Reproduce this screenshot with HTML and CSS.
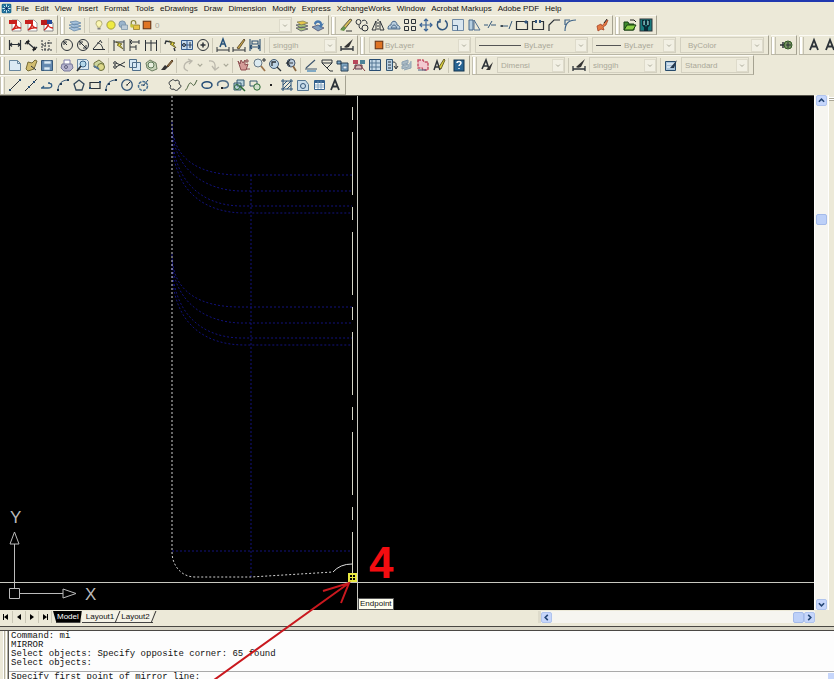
FILE: index.html
```html
<!DOCTYPE html>
<html lang="en">
<head>
<meta charset="utf-8">
<title>Drawing editor</title>
<link rel="stylesheet" href="styles.css">
</head>
<body>
<svg class="sprite" aria-hidden="true">
  <symbol id="app" viewBox="0 0 16 16"><rect x="1" y="1" width="14" height="14" rx="2" fill="#1c6a94"/><path d="M8 2v12M2 8h12M4 4l8 8M12 4l-8 8" stroke="#d4f0fa" stroke-width="1.4"/><circle cx="8" cy="8" r="2.4" fill="#123c70"/></symbol>
  <symbol id="pdf" viewBox="0 0 16 16"><path d="M5 3h6l3 3v8H5z" fill="#fff" stroke="#999"/><path d="M2 3h8v4H2z" fill="#c8201c" stroke="none"/><path d="M5 13c3-2 4-5 4-7 0 3 2 5 5 5-4-1-6 0-9 2z" fill="none" stroke="#d02018" stroke-width="1.4"/></symbol>
  <symbol id="pdf2" viewBox="0 0 16 16"><path d="M5 3h6l3 3v8H5z" fill="#fff" stroke="#888"/><path d="M2 3h6v5H2z" fill="#b81c1c" stroke="none"/><path d="M8 3h5v4H8z" fill="#244a9c" stroke="none"/><path d="M5 13c3-2 4-4 4-6 0 2 2 4 5 4" fill="none" stroke="#d02018" stroke-width="1.4"/></symbol>
  <symbol id="layers" viewBox="0 0 16 16"><path d="M2 11l7-1 5 2-7 2zM2 8l7-1 5 2-7 2zM3 5l6-1 5 2-7 2z" fill="#a6c2dc" stroke="#6688aa" stroke-width=".8"/></symbol>
  <symbol id="layerprev" viewBox="0 0 16 16"><path d="M2 11l7-1 5 2-7 2zM2 8l7-1 5 2-7 2z" fill="#a9c47a" stroke="#556" stroke-width=".8"/><path d="M3 5l6-1 5 2-7 2z" fill="#e5c649" stroke="#775" stroke-width=".7"/></symbol>
  <symbol id="layerstate" viewBox="0 0 16 16"><path d="M2 10l6-2 6 3-6 3z" fill="#7f9dbc" stroke="#446" stroke-width=".7"/><path d="M4 7c0-5 8-5 8 0l2-1-3 5-3-3h2c0-3-4-3-4 0z" fill="#4778ad" stroke="none"/></symbol>
  <symbol id="bulb" viewBox="0 0 16 16"><path d="M6 11c0-2-2-3-2-5a4 4 0 018 0c0 2-2 3-2 5z" fill="#fbf6b0" stroke="#9b975a"/><path d="M6 12h4v2H6z" fill="#7d7d7d"/></symbol>
  <symbol id="sun" viewBox="0 0 16 16"><circle cx="8" cy="8" r="5.5" fill="#eeea42" stroke="#888330"/></symbol>
  <symbol id="freeze" viewBox="0 0 16 16"><circle cx="7" cy="7" r="4.5" fill="#9ab4cc" stroke="#67839d"/><path d="M6 8h8v6H6z" fill="#bccbd7" stroke="#7790a6"/></symbol>
  <symbol id="lock" viewBox="0 0 16 16"><path d="M3 8V5c0-4 6-4 6 0v2" fill="none" stroke="#87823a" stroke-width="1.6"/><path d="M6 8h8v6H6z" fill="#e7c443" stroke="#8c7424"/><circle cx="4" cy="9" r="2.5" fill="#c6c33a"/></symbol>
  <symbol id="swatch" viewBox="0 0 16 16"><rect x="3" y="3" width="10" height="10" fill="#df7424" stroke="#6c3818" stroke-width="1.5"/></symbol>
  <symbol id="caret" viewBox="0 0 8 8"><path d="M1 2.5l3 3 3-3" fill="none" stroke="#aaa999" stroke-width="1.6"/></symbol>
  <symbol id="erase" viewBox="0 0 16 16"><path d="M3 12L12 2l2 1-8 10z" fill="#d8bd58" stroke="#4a4636" stroke-width=".9"/><path d="M2 13l4-4 2 2-2 3z" fill="#69944e" stroke="none"/><path d="M8 14h6" stroke="#333"/></symbol>
  <symbol id="copy" viewBox="0 0 16 16"><circle cx="4.5" cy="5" r="2.5"/><circle cx="11" cy="11" r="3"/><path d="M8 4c3-2 5 0 5 3M5 8c0 3 1 4 3 4"/></symbol>
  <symbol id="mirror" viewBox="0 0 16 16"><path d="M6 4v9H2zM10 4v9h4z"/><path d="M8 2v12" stroke-dasharray="2 1"/></symbol>
  <symbol id="offset" viewBox="0 0 16 16"><path d="M2 12c0-3 1-4 3-4 0-5 6-5 6 0 2 0 3 2 3 4z" fill="#b9cede" stroke="#48688a"/><path d="M5 11c1-1 1-3 3-3s2 2 3 3z" stroke="#48688a"/></symbol>
  <symbol id="array" viewBox="0 0 16 16"><path d="M2.500 2.500h4v4h-4zM9.500 2.500h4v4h-4zM2.500 9.500h4v4h-4zM9.500 9.500h4v4h-4z"/></symbol>
  <symbol id="move" viewBox="0 0 16 16"><path d="M8 2v12M2 8h12M6 4l2-2 2 2M6 12l2 2 2-2M4 6L2 8l2 2M12 6l2 2-2 2" stroke="#3a6496" stroke-width="1.200"/></symbol>
  <symbol id="rotate" viewBox="0 0 16 16"><path d="M5 4a5 5 0 106-.5M6 2v3H3" stroke="#33587f" stroke-width="1.500"/></symbol>
  <symbol id="scale" viewBox="0 0 16 16"><path d="M2.500 2.500h11v11h-11z" stroke="#708aa5" fill="#d9e6ef"/><path d="M2.500 8.500h5v5" stroke="#48688a"/></symbol>
  <symbol id="stretch" viewBox="0 0 16 16"><path d="M3 3h4v10H3z" fill="#b7d0e2" stroke="#48688a"/><path d="M8 3l6 10H8z" stroke="#4f6f91"/></symbol>
  <symbol id="trim" viewBox="0 0 16 16"><path d="M2 8h4M9 8h5M6 11l4-7" stroke="#34587a"/></symbol>
  <symbol id="extend" viewBox="0 0 16 16"><path d="M2 9h8M11 12l3-8" stroke="#34587a"/><circle cx="4" cy="9" r=".6" fill="#222"/></symbol>
  <symbol id="break" viewBox="0 0 16 16"><path d="M2.500 4.500h11v8h-11z" stroke-width="1.200"/><path d="M11 4h2v2h-2z" fill="#335780" stroke="#335780"/></symbol>
  <symbol id="break2" viewBox="0 0 16 16"><path d="M6 4.500H2.500v8h11v-8H10" stroke-width="1.200"/><path d="M5 3h2v3H5zM9 3h2v3H9z" fill="#335780" stroke="none"/></symbol>
  <symbol id="chamfer" viewBox="0 0 16 16"><path d="M3 14V8l5-5h6" stroke-width="1.200"/></symbol>
  <symbol id="fillet" viewBox="0 0 16 16"><path d="M3 14C3 7 6 3 14 3M3 8V3h5" stroke="#3f6488" stroke-width="1.200"/></symbol>
  <symbol id="explode" viewBox="0 0 16 16"><path d="M3 9l4-2 1 2 4-5 2-1-2 5-3 2 1 3-3-1-3 2z" fill="#e57b43" stroke="#a64326" stroke-width=".8"/><path d="M10 6l3-4" stroke="#222"/></symbol>
  <symbol id="openg" viewBox="0 0 16 16"><path d="M2 5h4l1 2h5v6H2z" fill="#3f8b2d" stroke="#173e13"/><path d="M2 13l3-5h9l-3 5z" fill="#8bce48" stroke="#173e13"/><path d="M8 3h4l2 2" stroke="#222"/></symbol>
  <symbol id="teal" viewBox="0 0 16 16"><rect x="2" y="2" width="12" height="12" fill="#187a7c"/><path d="M5 3v5l2 2v4M11 3v5l-2 2v4M8 3v5" stroke="#0b2531" stroke-width="1.800"/><path d="M6 4v4M10 4v4" stroke="#c4e1df"/></symbol>
  <symbol id="dlinear" viewBox="0 0 16 16"><path d="M2.500 3v10M13.500 3v10M3 7.500h10M5 6L3 7.500l2 2M11 6l2 1.500-2 2" stroke-width="1.200"/></symbol>
  <symbol id="daligned" viewBox="0 0 16 16"><path d="M4 5l8 7M2 7l4-4M10 14l4-4" stroke-width="1.300"/><path d="M3 4h4l-3 4zM13 13H9l3-4z" fill="#222" stroke="none"/></symbol>
  <symbol id="dordinate" viewBox="0 0 16 16"><path d="M3 3v10h11M6 13V6h7M10 13V3M3 8h4" stroke-dasharray="2 1"/></symbol>
  <symbol id="dradius" viewBox="0 0 16 16"><circle cx="8" cy="8" r="5.500"/><path d="M8 8L4 4M5 8V5h3"/></symbol>
  <symbol id="ddiameter" viewBox="0 0 16 16"><circle cx="8" cy="8" r="5.500"/><path d="M4 4l8 8M5 8V5h3M11 8v3H8"/></symbol>
  <symbol id="dangular" viewBox="0 0 16 16"><path d="M2 12.500h12M2 12l7-8M6 6c4 0 5 3 6 6M9 3l2 3"/></symbol>
  <symbol id="quick" viewBox="0 0 16 16"><path d="M3 3v11M13 3v11M3 5h10"/><path d="M5 5l6 2-2 1 3 4-6-4 2-1z" fill="#e7d938" stroke="#57521c" stroke-width=".7"/></symbol>
  <symbol id="baseline" viewBox="0 0 16 16"><path d="M3 2v12M3 5h9M3 10h6M12 3v4M9 8v5M5 3L3 5l2 2"/></symbol>
  <symbol id="continue" viewBox="0 0 16 16"><path d="M2.500 3v11M8 3v11M13.500 3v11M3 6h10"/></symbol>
  <symbol id="leader" viewBox="0 0 16 16"><path d="M2 7l1-3 5 1M11 11l1 3" stroke-width="1.400"/><path d="M6 4l6 2-2 1 3 4-6-4 2-1z" fill="#e7d938" stroke="#57521c" stroke-width=".8"/></symbol>
  <symbol id="tolerance" viewBox="0 0 16 16"><path d="M2.500 3.500h11v9h-11zM8 4v8M2 8h12" stroke="#345b8c" fill="#c8dced"/><circle cx="5" cy="8" r="1.500"/><path d="M11 5v6"/></symbol>
  <symbol id="center" viewBox="0 0 16 16"><circle cx="8" cy="8" r="5.500"/><path d="M8 5.500v5M5.500 8h5" stroke-width="1.500"/></symbol>
  <symbol id="dimtext" viewBox="0 0 16 16"><path d="M2 13h12M2 10v5M14 10v5"/><path d="M5 10l3-8 3 8M6 7h4" stroke="#234f78" stroke-width="1.500"/></symbol>
  <symbol id="dimedit" viewBox="0 0 16 16"><path d="M2 13h12M2 10v5M14 10v5"/><path d="M6 11l7-9 1 1-6 9z" fill="#c7a84b" stroke="#4d3922" stroke-width=".8"/></symbol>
  <symbol id="dimupdate" viewBox="0 0 16 16"><path d="M3 2v12M13 2v12M3 10h10M5 4h6v3H5zM5 8l-2 2 2 2M11 8l2 2-2 2" stroke="#294d70" stroke-width="1.100"/></symbol>
  <symbol id="dimstyle" viewBox="0 0 16 16"><path d="M2 12h12M2 9v5M14 9v5" stroke-width="1.300"/><path d="M5 10l9-8-4 8c-2 1-4 1-5 0z" fill="#333" stroke="none"/></symbol>
  <symbol id="green" viewBox="0 0 16 16"><path d="M2 8h5M5 5v6" stroke-width="1.500"/><circle cx="10" cy="8" r="4" fill="#75905f" stroke="#315a27"/><path d="M8 8h5M10 5v6"/></symbol>
  <symbol id="text" viewBox="0 0 16 16"><path d="M4 13l4-10 4 10M5.500 9.500h5" stroke-width="1.800"/></symbol>
  <symbol id="new" viewBox="0 0 16 16"><path d="M2.500 3.500h8l3 3v7h-11z" fill="#dbeaf4" stroke="#67869e"/><path d="M10.500 3.500v3h3" stroke="#67869e"/></symbol>
  <symbol id="open" viewBox="0 0 16 16"><path d="M3 12l2-7 4 1 3-3 2 1-3 8-6 2z" fill="#d2bd6e" stroke="#766c37"/><path d="M8 9l5 4"/></symbol>
  <symbol id="save" viewBox="0 0 16 16"><path d="M2.500 3.500h11v10h-11z" fill="#6288b0" stroke="#365878"/><path d="M5 4h7v3H5zM5 10h6v3H5z" fill="#dcecf6" stroke="#7798b4" stroke-width=".7"/></symbol>
  <symbol id="print" viewBox="0 0 16 16"><path d="M5 7V3h6v4" fill="#fff" stroke="#7c7daa"/><path d="M3 7h10l1 4-3 3H5l-3-3z" fill="#b7b5cf" stroke="#77789a"/><circle cx="7" cy="10" r="1.500" stroke="#5f607e"/></symbol>
  <symbol id="preview" viewBox="0 0 16 16"><path d="M2.500 2.500h9l2 2v8h-11z" fill="#d9e9f2" stroke="#6a88a2"/><circle cx="8" cy="7" r="3" fill="#b5d8e9" stroke="#396589"/><path d="M6 9l-4 5" stroke-width="1.700"/></symbol>
  <symbol id="publish" viewBox="0 0 16 16"><path d="M3 6l5-3 5 4-4 5-6-2z" fill="#cdd59d" stroke="#737444"/><circle cx="10" cy="10" r="3.500" fill="#ddd98a" stroke="#676c38"/><path d="M3 9l5 3" stroke="#54769a" stroke-width="2"/></symbol>
  <symbol id="cut" viewBox="0 0 16 16"><path d="M14 5L5 10M14 10L5 6"/><circle cx="4" cy="6" r="1.300"/><circle cx="4" cy="10" r="1.300"/></symbol>
  <symbol id="duplicate" viewBox="0 0 16 16"><path d="M2.500 2.500h7v8h-7zM5.500 5.500h8v8h-8z" fill="#d8e9f4" stroke="#506f8a"/></symbol>
  <symbol id="paste" viewBox="0 0 16 16"><path d="M3 6l4-3 6 3 1 6-5 2-5-3z" fill="#c7d3b8" stroke="#6c7e61"/><circle cx="8" cy="8" r="3" fill="#e9efdf" stroke="#5c7956"/></symbol>
  <symbol id="brush" viewBox="0 0 16 16"><path d="M2 13l4-5 3 2-3 3z" fill="#333" stroke="none"/><path d="M8 9l5-6 1 1-5 6z" fill="#a27f4e" stroke="#5a4127"/></symbol>
  <symbol id="undo" viewBox="0 0 16 16"><path d="M9 14C3 12 4 5 12 4M9 2l4 2-3 3" stroke="#bbb8ac" stroke-width="1.300"/></symbol>
  <symbol id="redo" viewBox="0 0 16 16"><path d="M4 4c5-1 7 3 6 8M7 9l3 4 4-3" stroke="#bbb8ac" stroke-width="1.300"/></symbol>
  <symbol id="pan" viewBox="0 0 16 16"><path d="M3 4l2 3 1-4 2 3 2-3v5l3-1-2 6H6z" fill="#d59c98" stroke="#8d4f51"/><path d="M12 2v4M10 4h4M11 12h4" stroke="#8d4f51"/></symbol>
  <symbol id="zoom" viewBox="0 0 16 16"><circle cx="7" cy="6" r="4" fill="#dceaf0" stroke="#687986"/><path d="M10 9l4 5" stroke="#9c754c" stroke-width="1.800"/><path d="M11 3h4M13 1v4"/></symbol>
  <symbol id="zoomwin" viewBox="0 0 16 16"><circle cx="7" cy="7" r="4.500" fill="#bdd3e3" stroke="#435b75"/><path d="M10 10l4 4M5 9V5h4" stroke-width="1.300"/></symbol>
  <symbol id="zoomprev" viewBox="0 0 16 16"><circle cx="8" cy="6" r="4" fill="#bdcddd" stroke="#45556d"/><path d="M10 9l3 5" stroke="#876743" stroke-width="1.800"/><path d="M10 6H4l3-3M4 6l3 3" stroke-width="1.200"/></symbol>
  <symbol id="dist" viewBox="0 0 16 16"><path d="M2 12h12M3 11l9-8" stroke="#405870" stroke-width="1.200"/><path d="M4 14h9" stroke="#80a9c4" stroke-width="2"/></symbol>
  <symbol id="area" viewBox="0 0 16 16"><path d="M3 3h10v3l-5 5-5-5zM3 6h10M8 11l3 3h3"/></symbol>
  <symbol id="props" viewBox="0 0 16 16"><path d="M2 4h4v3H2zM6 6h7v8H6z" fill="#7ca6c3" stroke="#263e55"/><path d="M8 9h4v3H8z" fill="#e3edf4" stroke="#577896"/></symbol>
  <symbol id="design" viewBox="0 0 16 16"><path d="M2 3h5v4H2z" fill="#b8465a" stroke="none"/><path d="M9 3h5v4H9z" fill="#4b8398" stroke="none"/><path d="M4 8h7v4H4z" fill="#d8b9b8" stroke="#57364a"/><path d="M2 13l4-5M14 14l-5-6" stroke="#823e42"/></symbol>
  <symbol id="palette" viewBox="0 0 16 16"><path d="M2.500 2.500h11v11h-11z" fill="#c3d8e7" stroke="#284d72"/><path d="M5 3v10M9 3v10M3 6h10M3 10h10" stroke="#577896"/></symbol>
  <symbol id="sheet" viewBox="0 0 16 16"><path d="M3.500 2.500h6v11h-6z" fill="#b8d0e2" stroke="#345775"/><path d="M5 5h3M5 8h3M5 11h3M10 5c4 0 3 3 3 6M11 9l2 3 2-3"/></symbol>
  <symbol id="markup" viewBox="0 0 16 16"><path d="M3 5l6-2v3L3 8zM3 9l6-2v3l-6 2zM5 13l7-2V4" fill="#a9bac5" stroke="#8fa3b2"/></symbol>
  <symbol id="cloudred" viewBox="0 0 16 16"><path d="M3 3h5l1 2h4v8H8l-1-2H3z" fill="#f3cad1" stroke="#c75267" stroke-width="1.500" stroke-dasharray="3 1"/><path d="M3 13h8" stroke="#445f83"/></symbol>
  <symbol id="calc" viewBox="0 0 16 16"><path d="M3 13l3-9 3 9M4 10h4" stroke-width="1.500"/><path d="M8 10l5-8 1 1-4 9z" fill="#ddd13b" stroke="#6a632a"/></symbol>
  <symbol id="help" viewBox="0 0 16 16"><rect x="3" y="3" width="10" height="11" fill="#286594" stroke="#12344f"/><path d="M6 6c0-2 4-2 4 0 0 1-2 2-2 3M8 11v1" stroke="#fff" stroke-width="1.400"/></symbol>
  <symbol id="textstyle" viewBox="0 0 16 16"><path d="M3 12l4-9 3 9M4 9h5" stroke-width="1.600"/><path d="M7 13l7-8-3 8z" fill="#333" stroke="none"/></symbol>
  <symbol id="tablestyle" viewBox="0 0 16 16"><path d="M2.500 4.500h10v9h-10z" fill="#a8c3d9" stroke="#284b6b"/><path d="M4 7h7M4 10h7" stroke="#fff"/><path d="M7 11l7-8-3 8z" fill="#24384e" stroke="none"/></symbol>
  <symbol id="line" viewBox="0 0 16 16"><path d="M3 13L13 3"/><path d="M2 12h2v2H2zM12 2h2v2h-2z" fill="#274e76" stroke="none"/></symbol>
  <symbol id="xline" viewBox="0 0 16 16"><path d="M2 14L14 2"/><path d="M5 9h2v2H5zM10 4h2v2h-2z" fill="#274e76" stroke="none"/></symbol>
  <symbol id="pline" viewBox="0 0 16 16"><path d="M2 11h7c5 0 5-5 0-5M3 11l2-2M9 6h2" stroke="#345f84" stroke-width="1.300"/></symbol>
  <symbol id="arc" viewBox="0 0 16 16"><path d="M3 13C3 7 7 3 13 3" stroke="#345577"/><path d="M2 12h2v2H2zM5 6h2v2H5zM12 2h2v2h-2z" fill="#233e58" stroke="none"/></symbol>
  <symbol id="polygon" viewBox="0 0 16 16"><path d="M8 3l5 4-2 6H5L3 7z" stroke="#34495c" stroke-width="1.300"/></symbol>
  <symbol id="rect" viewBox="0 0 16 16"><path d="M3 5.500h10v6H3z" stroke-width="1.200"/><path d="M2 10h2v2H2zM12 4h2v2h-2z" fill="#274e76" stroke="none"/></symbol>
  <symbol id="circle" viewBox="0 0 16 16"><circle cx="8" cy="8" r="5.300" stroke="#345577" stroke-width="1.300"/><path d="M8 8l3-3M7 8h2"/></symbol>
  <symbol id="gear" viewBox="0 0 16 16"><circle cx="8" cy="9" r="4.500" stroke="#466f91" stroke-width="1.500" stroke-dasharray="3 1"/><path d="M8 9l5-6M6 8h4" stroke="#294d70"/></symbol>
  <symbol id="revcloud" viewBox="0 0 16 16"><path d="M4 4c2-3 4 0 4 0 3-2 5 0 4 3 3 1 2 4 0 4-1 3-4 3-5 1-3 1-5-1-3-3-3-2-2-5 0-5z"/></symbol>
  <symbol id="spline" viewBox="0 0 16 16"><path d="M2 13c2 1 3-6 5-7s3 5 5 1l2-4" stroke="#48603c"/></symbol>
  <symbol id="ellipse" viewBox="0 0 16 16"><ellipse cx="8" cy="8" rx="5" ry="3.300" stroke="#234c76" stroke-width="1.500"/></symbol>
  <symbol id="ellarc" viewBox="0 0 16 16"><path d="M3 9C1 5 6 3 10 4s5 6 0 7H7" stroke="#4b6984" stroke-width="1.400"/><path d="M6 10h2v2H6z" fill="#222" stroke="none"/></symbol>
  <symbol id="insert" viewBox="0 0 16 16"><path d="M3 6h7v7H3zM6 3h7v6H6z" fill="#b9d3db" stroke="#365b71"/><circle cx="6" cy="10" r="2.500" stroke="#2c6b34"/><path d="M9 9l5 5" stroke="#2c6b34" stroke-width="1.500"/></symbol>
  <symbol id="block" viewBox="0 0 16 16"><path d="M3 4h7v5H3z" stroke="#365b71"/><circle cx="10" cy="10" r="3.200" fill="#d4e0cc" stroke="#2c6b34"/></symbol>
  <symbol id="point" viewBox="0 0 16 16"><rect x="7" y="7" width="2" height="2" fill="#222" stroke="none"/></symbol>
  <symbol id="hatch" viewBox="0 0 16 16"><path d="M4 2v12M12 2v12M2 4h12M2 12h12M4 8l4-4M4 12l8-8M8 12l4-4" stroke="#2b5378"/></symbol>
  <symbol id="region" viewBox="0 0 16 16"><path d="M2.500 3.500h8l3 4v6h-11z" fill="#c9dce9" stroke="#567793"/><circle cx="8" cy="9" r="2.500" stroke="#345577"/></symbol>
  <symbol id="table" viewBox="0 0 16 16"><path d="M3.500 3.500h10v9h-10z" fill="#fff" stroke="#34618d"/><path d="M3 5h11" stroke="#34618d" stroke-width="2"/><path d="M7 4v8M10 4v8M4 8h9M4 10h9" stroke="#6d94b5" stroke-width=".8"/></symbol>
  <symbol id="up" viewBox="0 0 8 8"><path d="M1 5.500l3-3 3 3" fill="none" stroke="#234574" stroke-width="1.800"/></symbol>
  <symbol id="down" viewBox="0 0 8 8"><path d="M1 2.500l3 3 3-3" fill="none" stroke="#234574" stroke-width="1.800"/></symbol>
  <symbol id="left" viewBox="0 0 8 8"><path d="M5.500 1l-3 3 3 3" fill="none" stroke="#234574" stroke-width="1.800"/></symbol>
  <symbol id="right" viewBox="0 0 8 8"><path d="M2.500 1l3 3-3 3" fill="none" stroke="#234574" stroke-width="1.800"/></symbol>
  <symbol id="first" viewBox="0 0 8 8"><path d="M1 1h1v6H1zM6 1v6L2 4z"/></symbol>
  <symbol id="prev" viewBox="0 0 8 8"><path d="M6 1v6L2 4z"/></symbol>
  <symbol id="next" viewBox="0 0 8 8"><path d="M2 1v6l4-3z"/></symbol>
  <symbol id="last" viewBox="0 0 8 8"><path d="M6 1h1v6H6zM2 1v6l4-3z"/></symbol>
</svg>

<nav class="menu" aria-label="Main menu">
  <svg class="app-icon"><use href="#app"/></svg>
  <button>File</button><button>Edit</button><button>View</button><button>Insert</button><button>Format</button><button>Tools</button><button>eDrawings</button><button>Draw</button><button>Dimension</button><button>Modify</button><button>Express</button><button>XchangeWorks</button><button>Window</button><button>Acrobat Markups</button><button>Adobe PDF</button><button>Help</button>
</nav>

<div class="row">
  <div class="bar">
    <button class="tool" aria-label="Convert to PDF"><svg><use href="#pdf"/></svg></button>
    <button class="tool" aria-label="PDF and email"><svg><use href="#pdf"/></svg></button>
    <button class="tool" aria-label="PDF and review"><svg><use href="#pdf2"/></svg></button>
  </div>
  <div class="bar">
    <button class="tool" aria-label="Layer manager"><svg><use href="#layers"/></svg></button>
    <i class="sep"></i>
    <label class="combo layer">
      <svg><use href="#bulb"/></svg><svg><use href="#sun"/></svg><svg><use href="#freeze"/></svg><svg><use href="#lock"/></svg><svg><use href="#swatch"/></svg>
      <select aria-label="Layer" disabled><option>0</option></select><svg class="caret"><use href="#caret"/></svg>
    </label>
    <button class="tool" aria-label="Make layer current"><svg><use href="#layerprev"/></svg></button>
    <button class="tool" aria-label="Layer previous"><svg><use href="#layerstate"/></svg></button>
  </div>
  <div class="bar">
    <button class="tool" aria-label="Erase"><svg><use href="#erase"/></svg></button>
    <button class="tool" aria-label="Copy object"><svg><use href="#copy"/></svg></button>
    <button class="tool" aria-label="Mirror"><svg><use href="#mirror"/></svg></button>
    <button class="tool" aria-label="Offset"><svg><use href="#offset"/></svg></button>
    <button class="tool" aria-label="Array"><svg><use href="#array"/></svg></button>
    <button class="tool" aria-label="Move"><svg><use href="#move"/></svg></button>
    <button class="tool" aria-label="Rotate"><svg><use href="#rotate"/></svg></button>
    <button class="tool" aria-label="Scale"><svg><use href="#scale"/></svg></button>
    <button class="tool" aria-label="Stretch"><svg><use href="#stretch"/></svg></button>
    <button class="tool" aria-label="Trim"><svg><use href="#trim"/></svg></button>
    <button class="tool" aria-label="Extend"><svg><use href="#extend"/></svg></button>
    <button class="tool" aria-label="Break at point"><svg><use href="#break"/></svg></button>
    <button class="tool" aria-label="Break"><svg><use href="#break2"/></svg></button>
    <button class="tool" aria-label="Chamfer"><svg><use href="#chamfer"/></svg></button>
    <button class="tool" aria-label="Fillet"><svg><use href="#fillet"/></svg></button>
    <i class="gap"></i>
    <button class="tool" aria-label="Explode"><svg><use href="#explode"/></svg></button>
  </div>
  <div class="bar">
    <button class="tool" aria-label="Open part"><svg><use href="#openg"/></svg></button>
    <button class="tool" aria-label="Exchange"><svg><use href="#teal"/></svg></button>
  </div>
</div>

<div class="row">
  <div class="bar">
    <button class="tool" aria-label="Linear dimension"><svg><use href="#dlinear"/></svg></button>
    <button class="tool" aria-label="Aligned dimension"><svg><use href="#daligned"/></svg></button>
    <button class="tool" aria-label="Ordinate dimension"><svg><use href="#dordinate"/></svg></button>
    <i class="sep"></i>
    <button class="tool" aria-label="Radius"><svg><use href="#dradius"/></svg></button>
    <button class="tool" aria-label="Diameter"><svg><use href="#ddiameter"/></svg></button>
    <button class="tool" aria-label="Angular"><svg><use href="#dangular"/></svg></button>
    <i class="sep"></i>
    <button class="tool" aria-label="Quick dimension"><svg><use href="#quick"/></svg></button>
    <button class="tool" aria-label="Baseline"><svg><use href="#baseline"/></svg></button>
    <button class="tool" aria-label="Continue"><svg><use href="#continue"/></svg></button>
    <i class="sep"></i>
    <button class="tool" aria-label="Leader"><svg><use href="#leader"/></svg></button>
    <button class="tool" aria-label="Tolerance"><svg><use href="#tolerance"/></svg></button>
    <button class="tool" aria-label="Center mark"><svg><use href="#center"/></svg></button>
    <i class="sep"></i>
    <button class="tool" aria-label="Dimension edit"><svg><use href="#dimtext"/></svg></button>
    <button class="tool" aria-label="Dimension text edit"><svg><use href="#dimedit"/></svg></button>
    <button class="tool" aria-label="Dimension update"><svg><use href="#dimupdate"/></svg></button>
    <i class="sep"></i>
    <label class="combo style"><select aria-label="Dimension style" disabled><option>singgih</option></select><svg class="caret"><use href="#caret"/></svg></label>
    <button class="tool" aria-label="Dimension style manager"><svg><use href="#dimstyle"/></svg></button>
  </div>
  <div class="bar">
    <label class="combo color"><svg><use href="#swatch"/></svg><select aria-label="Color" disabled><option>ByLayer</option></select><svg class="caret"><use href="#caret"/></svg></label>
    <label class="combo linetype"><i class="sample long"></i><select aria-label="Linetype" disabled><option>ByLayer</option></select><svg class="caret"><use href="#caret"/></svg></label>
    <label class="combo weight"><i class="sample"></i><select aria-label="Lineweight" disabled><option>ByLayer</option></select><svg class="caret"><use href="#caret"/></svg></label>
    <label class="combo plot"><select aria-label="Plot style" disabled><option>ByColor</option></select><svg class="caret"><use href="#caret"/></svg></label>
  </div>
  <div class="bar">
    <button class="tool" aria-label="Reference"><svg><use href="#green"/></svg></button>
  </div>
  <div class="bar">
    <button class="tool" aria-label="Multiline text"><svg><use href="#text"/></svg></button>
    <button class="tool" aria-label="Single line text"><svg><use href="#text"/></svg></button>
  </div>
</div>

<div class="row">
  <div class="bar">
    <button class="tool" aria-label="New"><svg><use href="#new"/></svg></button>
    <button class="tool" aria-label="Open"><svg><use href="#open"/></svg></button>
    <button class="tool" aria-label="Save"><svg><use href="#save"/></svg></button>
    <i class="sep"></i>
    <button class="tool" aria-label="Plot"><svg><use href="#print"/></svg></button>
    <button class="tool" aria-label="Plot preview"><svg><use href="#preview"/></svg></button>
    <button class="tool" aria-label="Publish"><svg><use href="#publish"/></svg></button>
    <i class="sep"></i>
    <button class="tool" aria-label="Cut"><svg><use href="#cut"/></svg></button>
    <button class="tool" aria-label="Copy"><svg><use href="#duplicate"/></svg></button>
    <button class="tool" aria-label="Paste"><svg><use href="#paste"/></svg></button>
    <button class="tool" aria-label="Match properties"><svg><use href="#brush"/></svg></button>
    <i class="sep"></i>
    <button class="tool" aria-label="Undo"><svg><use href="#undo"/></svg></button>
    <button class="tool drop" aria-label="Undo list"><svg><use href="#caret"/></svg></button>
    <button class="tool" aria-label="Redo"><svg><use href="#redo"/></svg></button>
    <button class="tool drop" aria-label="Redo list"><svg><use href="#caret"/></svg></button>
    <i class="sep"></i>
    <button class="tool" aria-label="Pan"><svg><use href="#pan"/></svg></button>
    <button class="tool" aria-label="Zoom realtime"><svg><use href="#zoom"/></svg></button>
    <button class="tool" aria-label="Zoom window"><svg><use href="#zoomwin"/></svg></button>
    <button class="tool" aria-label="Zoom previous"><svg><use href="#zoomprev"/></svg></button>
    <i class="sep"></i>
    <button class="tool" aria-label="Distance"><svg><use href="#dist"/></svg></button>
    <button class="tool" aria-label="Area"><svg><use href="#area"/></svg></button>
    <button class="tool" aria-label="Properties"><svg><use href="#props"/></svg></button>
    <button class="tool" aria-label="Design center"><svg><use href="#design"/></svg></button>
    <button class="tool" aria-label="Tool palettes"><svg><use href="#palette"/></svg></button>
    <button class="tool" aria-label="Sheet set"><svg><use href="#sheet"/></svg></button>
    <button class="tool" aria-label="Markup set"><svg><use href="#markup"/></svg></button>
    <button class="tool" aria-label="Markup cloud"><svg><use href="#cloudred"/></svg></button>
    <button class="tool" aria-label="Edit text"><svg><use href="#calc"/></svg></button>
    <i class="sep"></i>
    <button class="tool" aria-label="Help"><svg><use href="#help"/></svg></button>
  </div>
  <div class="bar">
    <button class="tool" aria-label="Text style manager"><svg><use href="#textstyle"/></svg></button>
    <label class="combo style"><select aria-label="Text style" disabled><option>Dimensi</option></select><svg class="caret"><use href="#caret"/></svg></label>
    <i class="sep"></i>
    <button class="tool" aria-label="Dimension styles"><svg><use href="#dimstyle"/></svg></button>
    <label class="combo style"><select aria-label="Dimension style name" disabled><option>singgih</option></select><svg class="caret"><use href="#caret"/></svg></label>
    <i class="sep"></i>
    <button class="tool" aria-label="Table styles"><svg><use href="#tablestyle"/></svg></button>
    <label class="combo style"><select aria-label="Table style" disabled><option>Standard</option></select><svg class="caret"><use href="#caret"/></svg></label>
  </div>
</div>

<div class="row">
  <div class="bar">
    <button class="tool" aria-label="Line"><svg><use href="#line"/></svg></button>
    <button class="tool" aria-label="Construction line"><svg><use href="#xline"/></svg></button>
    <button class="tool" aria-label="Polyline"><svg><use href="#pline"/></svg></button>
    <button class="tool" aria-label="Arc"><svg><use href="#arc"/></svg></button>
    <button class="tool" aria-label="Polygon"><svg><use href="#polygon"/></svg></button>
    <button class="tool" aria-label="Rectangle"><svg><use href="#rect"/></svg></button>
    <button class="tool" aria-label="Arc by points"><svg><use href="#arc"/></svg></button>
    <button class="tool" aria-label="Circle"><svg><use href="#circle"/></svg></button>
    <button class="tool" aria-label="Circle tangent"><svg><use href="#gear"/></svg></button>
    <i class="gap"></i>
    <button class="tool" aria-label="Revision cloud"><svg><use href="#revcloud"/></svg></button>
    <button class="tool" aria-label="Spline"><svg><use href="#spline"/></svg></button>
    <button class="tool" aria-label="Ellipse"><svg><use href="#ellipse"/></svg></button>
    <button class="tool" aria-label="Ellipse arc"><svg><use href="#ellarc"/></svg></button>
    <button class="tool" aria-label="Insert block"><svg><use href="#insert"/></svg></button>
    <button class="tool" aria-label="Make block"><svg><use href="#block"/></svg></button>
    <button class="tool" aria-label="Point"><svg><use href="#point"/></svg></button>
    <button class="tool" aria-label="Hatch"><svg><use href="#hatch"/></svg></button>
    <button class="tool" aria-label="Region"><svg><use href="#region"/></svg></button>
    <button class="tool" aria-label="Table"><svg><use href="#table"/></svg></button>
    <button class="tool" aria-label="Text"><svg><use href="#text"/></svg></button>
  </div>
</div>

<main class="work">
  <div class="canvas">
    <svg class="drawing" aria-label="Model space">
      <g transform="translate(0 -96)">
        <g class="hidden-lines">
          <path d="M172 122C172 160 200 175 240 175H352M172 128C174 170 205 190 240 191H352M172 132C173 180 200 205 240 206H352M172 136C172 192 205 213 245 213H352"/>
          <path d="M172 254C172 292 200 307 240 307H352M172 260C174 302 205 322 240 323H352M172 264C173 312 200 337 240 338H352M172 268C172 324 205 345 245 345H352"/>
          <path d="M251 175V577M172 551H352"/>
        </g>
        <path class="outline" d="M172 96V552C172 565 181 577 195 577H251L333 572"/>
        <path class="solid" d="M333 572Q340 564 352 564"/>
        <path class="axis" d="M352.500 107V574"/>
        <path class="ucs" d="M9.500 588.500h10v10h-10zM14.500 588V544M10 544h9l-4.500-12zM20 593.500H63M63 589v9l13-4.500z"/>
        <text class="ucs-label" x="10" y="523">Y</text>
        <text class="ucs-label" x="85" y="600">X</text>
        <line class="cross" x1="357.500" y1="95" x2="357.500" y2="3000"/>
        <line class="cross" x1="0" y1="582.500" x2="100%" y2="582.500"/>
        <path class="snap" d="M349 574h7v7h-7z"/><path class="snap-mark" d="M352.500 575v6M349 577.500h7"/>
        <text class="step" x="369" y="578">4</text>
      </g>
    </svg>
    <span class="tip">Endpoint</span>
  </div>
  <div class="vscroll">
    <button class="sb" aria-label="Scroll up"><svg><use href="#up"/></svg></button>
    <i class="before"></i><i class="thumb"></i><i class="after"></i>
    <button class="sb" aria-label="Scroll down"><svg><use href="#down"/></svg></button>
  </div>
  <div class="dock"></div>
</main>

<div class="tabs">
  <button class="nav" aria-label="First tab"><svg><use href="#first"/></svg></button>
  <button class="nav" aria-label="Previous tab"><svg><use href="#prev"/></svg></button>
  <button class="nav" aria-label="Next tab"><svg><use href="#next"/></svg></button>
  <button class="nav" aria-label="Last tab"><svg><use href="#last"/></svg></button>
  <button class="tab active">Model</button><button class="tab">Layout1</button><button class="tab">Layout2</button>
  <div class="hscroll">
    <button class="sb" aria-label="Scroll left"><svg><use href="#left"/></svg></button>
    <i class="track"></i><i class="thumb"></i>
    <button class="sb" aria-label="Scroll right"><svg><use href="#right"/></svg></button>
  </div>
</div>

<div class="splitter"></div>
<section class="command">
  <div class="handle"></div>
  <div class="console">
    <pre class="log">Command: mi
MIRROR
Select objects: Specify opposite corner: 65 found
Select objects:</pre>
    <div class="prompt"><label for="cmd">Specify first point of mirror line:</label><input id="cmd" type="text"><i class="end"></i></div>
  </div>
</section>

<svg class="callout" aria-hidden="true"><path d="M214 680L349 583M323 591L349 583L341 603"/></svg>
</body>
</html>
```
FILE: styles.css
```css
*, *::before, *::after { box-sizing: border-box; }
body {
  margin: 0;
  height: 100vh;
  display: flex;
  flex-direction: column;
  overflow: hidden;
  position: relative;
  background: #ece9d8;
  font-family: "Liberation Sans", sans-serif;
  font-size: 8px;
  color: #111;
}
button, select, input { font: inherit; color: inherit; margin: 0; padding: 0; border: 0; background: none; }
svg { display: block; flex: none; }
.sprite { position: absolute; width: 0; height: 0; }

.menu { flex: none; height: 15px; display: flex; align-items: center; border-top: 2px solid #2038b0; padding-left: 1px; }
.menu button { padding: 0 3px; white-space: nowrap; }
.app-icon { width: 11px; height: 11px; margin-right: 1px; }

.row { flex: none; height: 20px; display: flex; overflow: hidden; }
.bar {
  flex: none;
  display: flex;
  align-items: center;
  margin-right: 2px;
  padding-right: 2px;
  border-top: 1px solid #fbfaf4;
  border-right: 1px solid #a5a291;
  border-bottom: 1px solid #b9b6a5;
}
.bar::before {
  content: "";
  width: 5px;
  height: 17px;
  margin-right: 2px;
  border: solid #c4c1b1;
  border-width: 0 1px;
  background: linear-gradient(90deg, #fff 0 2px, #ece9d8 2px);
}
.tool { width: 16px; height: 16px; flex: none; }
.tool svg { width: 16px; height: 16px; fill: none; stroke: #2c3238; }
.tool.drop { width: 10px; }
.tool.drop svg { width: 6px; height: 6px; margin: 0 2px; }
.sep { width: 1px; height: 15px; margin: 0 2px 0 1px; background: #cbc8b7; }
.gap { width: 16px; }

.combo {
  height: 16px;
  margin: 0 2px;
  display: flex;
  align-items: center;
  border: 1px solid #d3d0c0;
  padding-left: 3px;
}
.combo svg { width: 12px; height: 12px; }
.combo .caret { width: 12px; height: 13px; padding: 3px 2px; border: 1px solid #dedbcb; background: #f2f0e4; }
.combo select { flex: 1; min-width: 0; appearance: none; color: #aaa899; opacity: 1; }
.layer { width: 203px; }
.layer select { padding-left: 2px; }
.style { width: 68px; }
.color { width: 102px; }
.linetype { width: 113px; }
.weight { width: 84px; }
.plot { width: 84px; padding-left: 7px; }
.sample { width: 25px; height: 1px; margin-right: 3px; background: #555; }
.sample.long { width: 42px; }

.work { flex: 1; min-height: 0; display: flex; }
.canvas { flex: 1; position: relative; overflow: hidden; background: #000; border-top: 1px solid #55534a; }
.drawing { width: 100%; height: 100%; fill: none; }
.hidden-lines { stroke: #12127c; stroke-dasharray: 2 2; }
.outline { stroke: #d0d0d0; stroke-dasharray: 2 2; }
.solid { stroke: #ddd; }
.axis { stroke: #d8d8c8; stroke-dasharray: 13 12 63 12; }
.ucs { stroke: #bbb; }
.ucs-label { fill: #bbb; font-size: 17px; }
.cross { stroke: #c8c8c0; }
.snap { stroke: #e8e840; stroke-width: 2; }
.snap-mark { stroke: #e8e840; }
.step { fill: #f40c10; font-size: 44px; font-weight: bold; }
.tip { position: absolute; left: 358px; bottom: 0; padding: 0 1px; line-height: 10px; border: 1px solid #555; background: #fffff0; }

.vscroll { width: 14px; display: flex; flex-direction: column; align-items: center; background: #f6f5f0; border-left: 1px solid #fff; }
.sb { width: 11px; height: 11px; flex: none; padding: 1px; border: 1px solid #b0c4ee; border-radius: 2px; background: #c6d6fb; }
.sb svg { width: 7px; height: 7px; }
.before { flex: 28; }
.after { flex: 97; }
.thumb { width: 11px; height: 11px; border: 1px solid #a4baea; border-radius: 2px; background: #bdd0f8; }
.dock { width: 6px; border-left: 1px solid #fff; background: linear-gradient(#ece9d8 2px, #fff 2px 3px, #aaa797 3px 4px, #fff 4px 5px, #aaa797 5px 6px, #ece9d8 6px); }

.tabs { flex: none; height: 14px; display: flex; align-items: center; padding-right: 19px; }
.nav { width: 13px; height: 12px; display: grid; place-items: center; border-right: 1px solid #cbc8b7; }
.nav svg { width: 8px; height: 8px; }
.tab { position: relative; height: 12px; padding: 0 3px 0 4px; background: #f4f2e6; border-bottom: 1px solid #444; }
.tab::after { content: ""; position: absolute; z-index: 1; top: 0; right: -1px; width: 1px; height: 12px; background: #333; transform: skewX(-22deg); }
.tab.active { margin-left: 1px; color: #fff; background: #000; clip-path: polygon(0 0, 100% 0, 94% 100%, 12% 100%); }
.hscroll { width: 34%; margin-left: auto; height: 12px; display: flex; align-items: center; background: #f6f5f0; border-left: 3px solid #dedbcb; }
.track { flex: 1; }

.splitter { flex: none; height: 5px; margin-top: 2px; border: solid #4a4844; border-width: 1px 0; background: #d8d5c6; }
.command { flex: none; display: flex; }
.handle { width: 9px; border-right: 1px solid #555; background: linear-gradient(90deg, #ece9d8 3px, #fff 3px 4px, #b5b2a1 4px 5px, #ece9d8 5px 6px, #fff 6px 7px, #b5b2a1 7px); }
.console { flex: 1; min-width: 0; background: #fdfdfd; font-family: "Liberation Mono", monospace; font-size: 9px; line-height: 9px; }
.log { margin: 0; padding: 1px 2px 3px; font: inherit; }
.prompt { height: 8px; padding: 1px 0 0 2px; display: flex; overflow: hidden; border-top: 1px solid #aaa; }
.prompt input { flex: 1; min-width: 0; height: 9px; outline: 0; }
.end { width: 6px; height: 9px; background: #c6d6fb; }

.callout { position: absolute; left: 0; top: 0; width: 100%; height: 100%; pointer-events: none; fill: none; stroke: #c9181e; stroke-width: 2; }
```
